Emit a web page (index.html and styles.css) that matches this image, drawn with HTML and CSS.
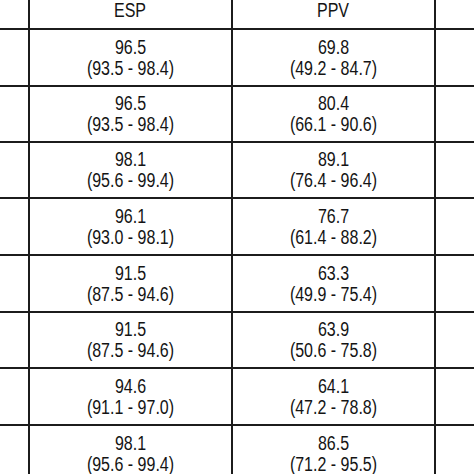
FILE: index.html
```html
<!DOCTYPE html>
<html>
<head>
<meta charset="utf-8">
<link rel="stylesheet" href="styles.css">
</head>
<body>
<div class="table">
  <div class="cell"></div>
  <div class="cell head"><span>ESP</span></div>
  <div class="cell head"><span>PPV</span></div>
  <div class="cell"></div>

  <div class="cell"></div>
  <div class="cell"><span>96.5</span><span>(93.5 - 98.4)</span></div>
  <div class="cell"><span>69.8</span><span>(49.2 - 84.7)</span></div>
  <div class="cell"></div>

  <div class="cell"></div>
  <div class="cell"><span>96.5</span><span>(93.5 - 98.4)</span></div>
  <div class="cell"><span>80.4</span><span>(66.1 - 90.6)</span></div>
  <div class="cell"></div>

  <div class="cell"></div>
  <div class="cell"><span>98.1</span><span>(95.6 - 99.4)</span></div>
  <div class="cell"><span>89.1</span><span>(76.4 - 96.4)</span></div>
  <div class="cell"></div>

  <div class="cell"></div>
  <div class="cell"><span>96.1</span><span>(93.0 - 98.1)</span></div>
  <div class="cell"><span>76.7</span><span>(61.4 - 88.2)</span></div>
  <div class="cell"></div>

  <div class="cell"></div>
  <div class="cell"><span>91.5</span><span>(87.5 - 94.6)</span></div>
  <div class="cell"><span>63.3</span><span>(49.9 - 75.4)</span></div>
  <div class="cell"></div>

  <div class="cell"></div>
  <div class="cell"><span>91.5</span><span>(87.5 - 94.6)</span></div>
  <div class="cell"><span>63.9</span><span>(50.6 - 75.8)</span></div>
  <div class="cell"></div>

  <div class="cell"></div>
  <div class="cell"><span>94.6</span><span>(91.1 - 97.0)</span></div>
  <div class="cell"><span>64.1</span><span>(47.2 - 78.8)</span></div>
  <div class="cell"></div>

  <div class="cell"></div>
  <div class="cell"><span>98.1</span><span>(95.6 - 99.4)</span></div>
  <div class="cell"><span>86.5</span><span>(71.2 - 95.5)</span></div>
  <div class="cell"></div>
</div>
</body>
</html>
```
FILE: styles.css
```css
html, body {
  margin: 0;
  padding: 0;
  background: #ffffff;
}
body {
  width: 474px;
  height: 474px;
  overflow: hidden;
}
.table {
  display: grid;
  grid-template-columns: 28px 201px 201px 1fr;
  grid-template-rows: 28px 55px 54px 54px 55px 55px 54px 55px 55px;
  gap: 2px;
  background: #1c1c1c;
  width: 474px;
}
.cell {
  background: #ffffff;
  display: flex;
  flex-direction: column;
  align-items: center;
  justify-content: center;
  font-family: "Liberation Sans", Arial, sans-serif;
  font-size: 20px;
  line-height: 21px;
  color: #141414;
}
.cell span {
  display: block;
  white-space: nowrap;
  transform: scaleX(0.8);
}
.head {
  justify-content: flex-start;
  padding-top: 0;
}
```
